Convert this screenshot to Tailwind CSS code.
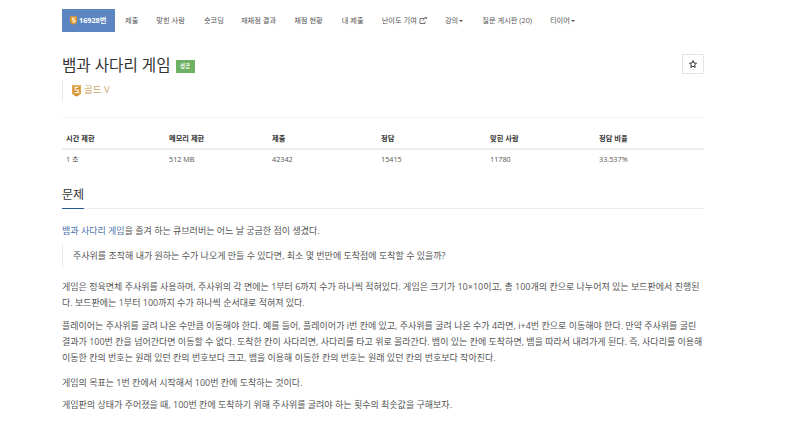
<!DOCTYPE html>
<html lang="ko">
<head>
    <meta charset="UTF-8">
    <title>뱀과 사다리 게임</title>
    <script src="https://cdn.jsdelivr.net/npm/@tailwindcss/browser@4"></script>
</head>
<body class="bg-white text-[#555] font-['Open_Sans','Noto_Sans_CJK_KR',sans-serif] text-[9px] overflow-hidden h-[425px]">
    <div class="w-[642px] ml-[62px]">

        <!-- Tabs -->
        <ul class="flex items-center h-[23px] mt-[9px] text-[7.25px] text-[#555] whitespace-nowrap">
            <li class="flex items-center h-full w-[53px] pl-[8px] gap-[2px] bg-[#5c86c1] text-white font-bold">
                <svg width="7" height="9" viewBox="0 0 9 11"><path d="M0 0h9v8l-4.500 3L0 8z" fill="#e0982c"/><path d="M6.500 2.500H3v2.500h3.500v2.500H3" stroke="#fff" stroke-width="1.200" fill="none"/></svg>
                <span>16928번</span>
            </li>
            <li class="ml-[10px]">제출</li>
            <li class="ml-[18px]">맞힌 사람</li>
            <li class="ml-[19px]">숏코딩</li>
            <li class="ml-[17px]">재채점 결과</li>
            <li class="ml-[18px]">채점 현황</li>
            <li class="ml-[19px]">내 제출</li>
            <li class="ml-[18px] flex items-center gap-[2px]">난이도 기여
                <svg width="8" height="7" viewBox="0 0 8 7" fill="none" stroke="#555" stroke-width=".8"><path d="M5 1.500H1v5h5V4.500M3.500 3.500L7 .5M5.500.5H7.500V2"/></svg>
            </li>
            <li class="ml-[18px] flex items-center gap-[1px]">강의<span class="border-x-[2.500px] border-x-transparent border-t-[2.500px] border-t-[#555]"></span></li>
            <li class="ml-[19px]">질문 게시판 (20)</li>
            <li class="ml-[18px] flex items-center gap-[1px]">티이어<span class="border-x-[2.500px] border-x-transparent border-t-[2.500px] border-t-[#555]"></span></li>
        </ul>

        <!-- Title -->
        <div class="flex items-start justify-between mt-[22px]">
            <div class="flex items-center gap-[5px] mt-[-1px]">
                <h1 class="text-[15.600px] leading-[24px] text-[#333]">뱀과 사다리 게임</h1>
                <span class="bg-[#6eb165] text-white text-[5.500px] leading-[13px] w-[19px] text-center font-bold mt-[3px]">성공</span>
            </div>
            <button class="w-[22px] h-[20px] border border-[#e5e5e5] flex items-center justify-center">
                <svg width="8" height="8" viewBox="0 0 24 24" fill="none" stroke="#333" stroke-width="3"><path d="M12 2l3 7 7.500.8-5.600 5 1.600 7.500L12 18.500 5.500 22.300l1.600-7.500-5.600-5L9 9z"/></svg>
            </button>
        </div>

        <!-- Tier -->
        <div class="flex items-center gap-[3px] border-l border-[#e8e8e8] h-[21px] pl-[9px] mt-[3px] text-[9.500px] text-[#cfa66d]">
            <svg width="9" height="12" viewBox="0 0 10 13"><path d="M0 0h10v9.500L5 13 0 9.500z" fill="#d48f27"/><path d="M1 1h8v8H1z" fill="none" stroke="#f5dba8" stroke-width=".6"/><path d="M6.800 2.600H3.500v2.800h3.300v2.800H3.300" stroke="#fff" stroke-width="1.200" fill="none"/></svg>
            <span>골드 V</span>
        </div>

        <div class="border-t border-[#f2f2f2] mt-[16px]"></div>

        <!-- Limits table -->
        <table class="w-full mt-[11px] text-left table-fixed text-[7.250px]">
            <thead>
                <tr class="h-[20px] border-b-2 border-[#eee] text-[#333]">
                    <th class="w-[103px] pl-[4px] font-bold">시간 제한</th>
                    <th class="w-[103px] pl-[4px] font-bold">메모리 제한</th>
                    <th class="w-[109px] pl-[4px] font-bold">제출</th>
                    <th class="w-[109px] pl-[4px] font-bold">정답</th>
                    <th class="w-[109px] pl-[4px] font-bold">맞힌 사람</th>
                    <th class="pl-[4px] font-bold">정답 비율</th>
                </tr>
            </thead>
            <tbody>
                <tr class="h-[20px]">
                    <td class="pl-[4px]">1 초</td>
                    <td class="pl-[4px]">512 MB</td>
                    <td class="pl-[4px]">42342</td>
                    <td class="pl-[4px]">15415</td>
                    <td class="pl-[4px]">11780</td>
                    <td class="pl-[4px]">33.537%</td>
                </tr>
            </tbody>
        </table>

        <!-- Problem -->
        <div class="mt-[14px] border-b border-[#eee] h-[26px]">
            <h2 class="inline-block text-[12px] leading-[24px] h-[26px] border-b border-[#2b5a9b] text-[#333]">문제</h2>
        </div>

        <div class="leading-[16px] whitespace-nowrap">
            <p class="mt-[14px]"><span class="text-[#4a72a8]">뱀과 사다리 게임</span>을 즐겨 하는 큐브러버는 어느 날 궁금한 점이 생겼다.</p>
            <blockquote class="mt-[5px] h-[23px] border-l border-[#e8e8e8] pl-[10px] flex items-center">주사위를 조작해 내가 원하는 수가 나오게 만들 수 있다면, 최소 몇 번만에 도착점에 도착할 수 있을까?</blockquote>
            <p class="mt-[12px]">게임은 정육면체 주사위를 사용하며, 주사위의 각 면에는 1부터 6까지 수가 하나씩 적혀있다. 게임은 크기가 10×10이고, 총 100개의 칸으로 나누어져 있는 보드판에서 진행된<br>다. 보드판에는 1부터 100까지 수가 하나씩 순서대로 적혀져 있다.</p>
            <p class="mt-[7px]">플레이어는 주사위를 굴려 나온 수만큼 이동해야 한다. 예를 들어, 플레이어가 i번 칸에 있고, 주사위를 굴려 나온 수가 4라면, i+4번 칸으로 이동해야 한다. 만약 주사위를 굴린<br>결과가 100번 칸을 넘어간다면 이동할 수 없다. 도착한 칸이 사다리면, 사다리를 타고 위로 올라간다. 뱀이 있는 칸에 도착하면, 뱀을 따라서 내려가게 된다. 즉, 사다리를 이용해<br>이동한 칸의 번호는 원래 있던 칸의 번호보다 크고, 뱀을 이용해 이동한 칸의 번호는 원래 있던 칸의 번호보다 작아진다.</p>
            <p class="mt-[9px]">게임의 목표는 1번 칸에서 시작해서 100번 칸에 도착하는 것이다.</p>
            <p class="mt-[6px]">게임판의 상태가 주어졌을 때, 100번 칸에 도착하기 위해 주사위를 굴려야 하는 횟수의 최솟값을 구해보자.</p>
        </div>
    </div>
</body>
</html>
